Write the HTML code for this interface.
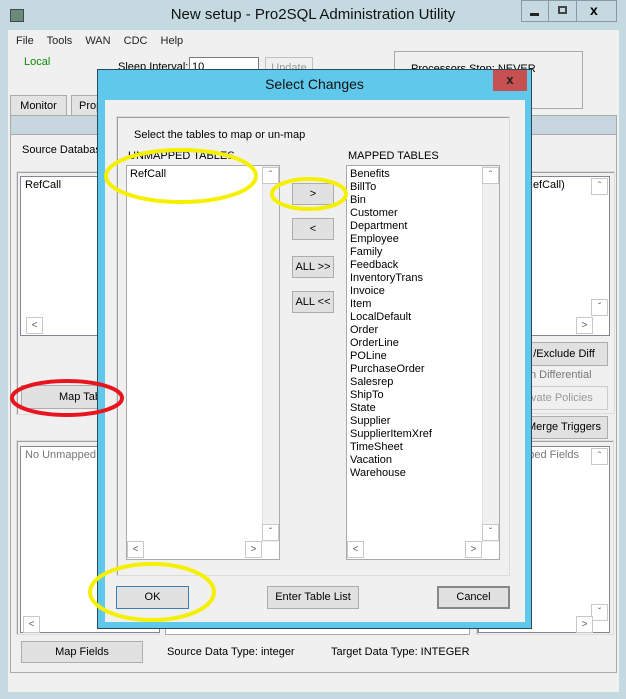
<!DOCTYPE html>
<html><head><meta charset="utf-8"><style>
*{box-sizing:border-box;margin:0;padding:0}
body{width:626px;height:699px;overflow:hidden;background:#c5d9e1;font-family:"Liberation Sans",sans-serif;font-size:11px;color:#000;position:relative;white-space:nowrap}
.a{position:absolute}
.btn{position:absolute;background:#e1e1e1;border:1px solid #adadad;text-align:center;line-height:20px;font-size:11px}
.lb{position:absolute;background:#fff;border:1px solid #828790}
.grp{position:absolute;border:1px solid #dcdcdc;box-shadow:inset 1px 1px 0 #a0a0a0}
.vs{position:absolute;background:#f0f0f0;border-left:1px solid #e0e0e0}
.sb{position:absolute;width:17px;height:17px;background:#fff;border:1px solid #c8c8c8;color:#606060;font-size:10px;text-align:center;line-height:15px}
</style></head><body>
<div class="a" style="left:10px;top:9px;width:14px;height:13px;background:#6a8a7a;border:1px solid #445"></div>
<div class="a" style="left:0;top:6px;width:626px;text-align:center;font-size:15px;color:#111">New setup - Pro2SQL Administration Utility</div>
<div class="a" style="left:521px;top:0;width:96px;height:22px;border:1px solid #8a9aa2;background:#c5d9e1"></div>
<div class="a" style="left:548px;top:0;width:1px;height:22px;background:#8a9aa2"></div>
<div class="a" style="left:576px;top:0;width:1px;height:22px;background:#8a9aa2"></div>
<div class="a" style="left:530px;top:13px;width:9px;height:3px;background:#222"></div>
<div class="a" style="left:558px;top:6px;width:9px;height:8px;border:2px solid #444"></div>
<div class="a" style="left:590px;top:2px;font-size:14px;font-weight:bold">x</div>
<div class="a" style="left:8px;top:30px;width:611px;height:662px;background:#f0f0f0"></div>
<div class="a" style="left:16px;top:35px;word-spacing:10px;color:#222">File Tools WAN CDC Help</div>
<div class="a" style="left:24px;top:56px;color:#0a8a0a">Local</div>
<div class="a" style="left:118px;top:61px">Sleep Interval:</div>
<div class="a" style="left:189px;top:57px;width:70px;height:22px;background:#fff;border:1px solid #7a7a7a;padding:3px 2px">10</div>
<div class="a" style="left:265px;top:57px;width:48px;height:22px;border:1px solid #c0c0c0;color:#999;text-align:center;line-height:20px">Update</div>
<div class="a" style="left:394px;top:51px;width:189px;height:58px;border:1px solid #aaa;background:#f0f0f0;padding:11px 16px">Processors Stop: NEVER</div>
<div class="a" style="left:10px;top:95px;width:57px;height:21px;border:1px solid #aaa;background:#e3e3e3;text-align:center;line-height:20px">Monitor</div>
<div class="a" style="left:71px;top:95px;width:40px;height:21px;border:1px solid #aaa;background:#e3e3e3;padding-left:7px;line-height:20px">Prop</div>
<div class="a" style="left:10px;top:115px;width:607px;height:558px;border:1px solid #aaa;background:#f0f0f0"></div>
<div class="a" style="left:11px;top:116px;width:605px;height:19px;background:#c8d6df;border-bottom:1px solid #aaa"></div>
<div class="a" style="left:22px;top:144px">Source Database</div>
<div class="grp" style="left:16px;top:171px;width:100px;height:244px"></div>
<div class="lb" style="left:20px;top:176px;width:95px;height:160px;padding:2px 4px">RefCall</div>
<div class="sb" style="left:26px;top:317px">&lt;</div>
<div class="btn" style="left:21px;top:385px;width:90px;height:24px;line-height:22px;padding-left:37px;text-align:left;overflow:hidden">Map Table</div>
<div class="grp" style="left:16px;top:440px;width:144px;height:195px"></div>
<div class="lb" style="left:20px;top:446px;width:140px;height:187px;padding:2px 4px;color:#777">No Unmapped</div>
<div class="sb" style="left:23px;top:616px">&lt;</div>
<div class="lb" style="left:165px;top:615px;width:305px;height:20px;border-color:#aaa"></div>
<div class="btn" style="left:21px;top:641px;width:122px;height:22px">Map Fields</div>
<div class="a" style="left:167px;top:646px">Source Data Type: integer</div>
<div class="a" style="left:331px;top:646px">Target Data Type: INTEGER</div>
<div class="grp" style="left:520px;top:171px;width:95px;height:243px"></div>
<div class="lb" style="left:520px;top:176px;width:90px;height:160px;padding:2px 4px">RefCall)</div>
<div class="sb" style="left:591px;top:178px">&#710;</div>
<div class="sb" style="left:591px;top:299px">&#711;</div>
<div class="sb" style="left:576px;top:317px">&gt;</div>
<div class="btn" style="left:520px;top:342px;width:88px;height:24px;line-height:22px">/Exclude Diff</div>
<div class="a" style="left:530px;top:369px;color:#777">n Differential</div>
<div class="a" style="left:520px;top:386px;width:88px;height:24px;border:1px solid #ccc;color:#999;padding-left:10px;line-height:22px">vate Policies</div>
<div class="btn" style="left:520px;top:416px;width:88px;height:23px;line-height:21px">Merge Triggers</div>
<div class="grp" style="left:476px;top:440px;width:138px;height:195px"></div>
<div class="lb" style="left:478px;top:446px;width:132px;height:187px;padding:2px 4px;color:#777;text-align:right;padding-right:30px">Unmapped Fields</div>
<div class="sb" style="left:591px;top:448px">&#710;</div>
<div class="sb" style="left:591px;top:604px">&#711;</div>
<div class="sb" style="left:576px;top:616px">&gt;</div>
<div class="a" style="left:97px;top:69px;width:435px;height:560px;background:#60c8ea;border:1px solid #2a4a5a"></div>
<div class="a" style="left:97px;top:76px;width:435px;text-align:center;font-size:14px;color:#111">Select Changes</div>
<div class="a" style="left:493px;top:70px;width:34px;height:21px;background:#c75050;text-align:center;font-weight:bold;font-size:13px;line-height:19px;color:#222">x</div>
<div class="a" style="left:105px;top:100px;width:420px;height:522px;background:#f0f0f0"></div>
<div class="grp" style="left:116px;top:116px;width:394px;height:460px"></div>
<div class="a" style="left:134px;top:129px">Select the tables to map or un-map</div>
<div class="a" style="left:128px;top:150px">UNMAPPED TABLES</div>
<div class="a" style="left:348px;top:150px">MAPPED TABLES</div>
<div class="lb" style="left:126px;top:165px;width:154px;height:395px;border-color:#aaa;padding:2px 3px">RefCall</div>
<div class="vs" style="left:262px;top:166px;width:17px;height:376px"></div>
<div class="sb" style="left:262px;top:167px">&#710;</div>
<div class="sb" style="left:262px;top:524px">&#711;</div>
<div class="sb" style="left:127px;top:541px">&lt;</div>
<div class="sb" style="left:245px;top:541px">&gt;</div>
<div class="lb" style="left:346px;top:165px;width:154px;height:395px;border-color:#aaa;padding:2px 3px;line-height:13px">Benefits<br>BillTo<br>Bin<br>Customer<br>Department<br>Employee<br>Family<br>Feedback<br>InventoryTrans<br>Invoice<br>Item<br>LocalDefault<br>Order<br>OrderLine<br>POLine<br>PurchaseOrder<br>Salesrep<br>ShipTo<br>State<br>Supplier<br>SupplierItemXref<br>TimeSheet<br>Vacation<br>Warehouse</div>
<div class="vs" style="left:482px;top:166px;width:17px;height:376px"></div>
<div class="sb" style="left:482px;top:167px">&#710;</div>
<div class="sb" style="left:482px;top:524px">&#711;</div>
<div class="sb" style="left:347px;top:541px">&lt;</div>
<div class="sb" style="left:465px;top:541px">&gt;</div>
<div class="btn" style="left:292px;top:183px;width:42px;height:22px">&gt;</div>
<div class="btn" style="left:292px;top:218px;width:42px;height:22px">&lt;</div>
<div class="btn" style="left:292px;top:256px;width:42px;height:22px">ALL &gt;&gt;</div>
<div class="btn" style="left:292px;top:291px;width:42px;height:22px">ALL &lt;&lt;</div>
<div class="btn" style="left:116px;top:586px;width:73px;height:23px;border-color:#3c7fb1;line-height:21px">OK</div>
<div class="btn" style="left:267px;top:586px;width:92px;height:23px;line-height:21px">Enter Table List</div>
<div class="btn" style="left:437px;top:586px;width:73px;height:23px;line-height:19px;border:2px solid #888">Cancel</div>
<svg class="a" style="left:0;top:0" width="626" height="699">
<ellipse cx="67" cy="398" rx="55" ry="17" fill="none" stroke="#e8141e" stroke-width="4"/>
<ellipse cx="181" cy="176" rx="75" ry="26" fill="none" stroke="#f5f000" stroke-width="4"/>
<ellipse cx="309" cy="194" rx="37" ry="15" fill="none" stroke="#f5f000" stroke-width="4"/>
<ellipse cx="152" cy="592" rx="62" ry="28" fill="none" stroke="#f5f000" stroke-width="4"/>
</svg>
</body></html>
